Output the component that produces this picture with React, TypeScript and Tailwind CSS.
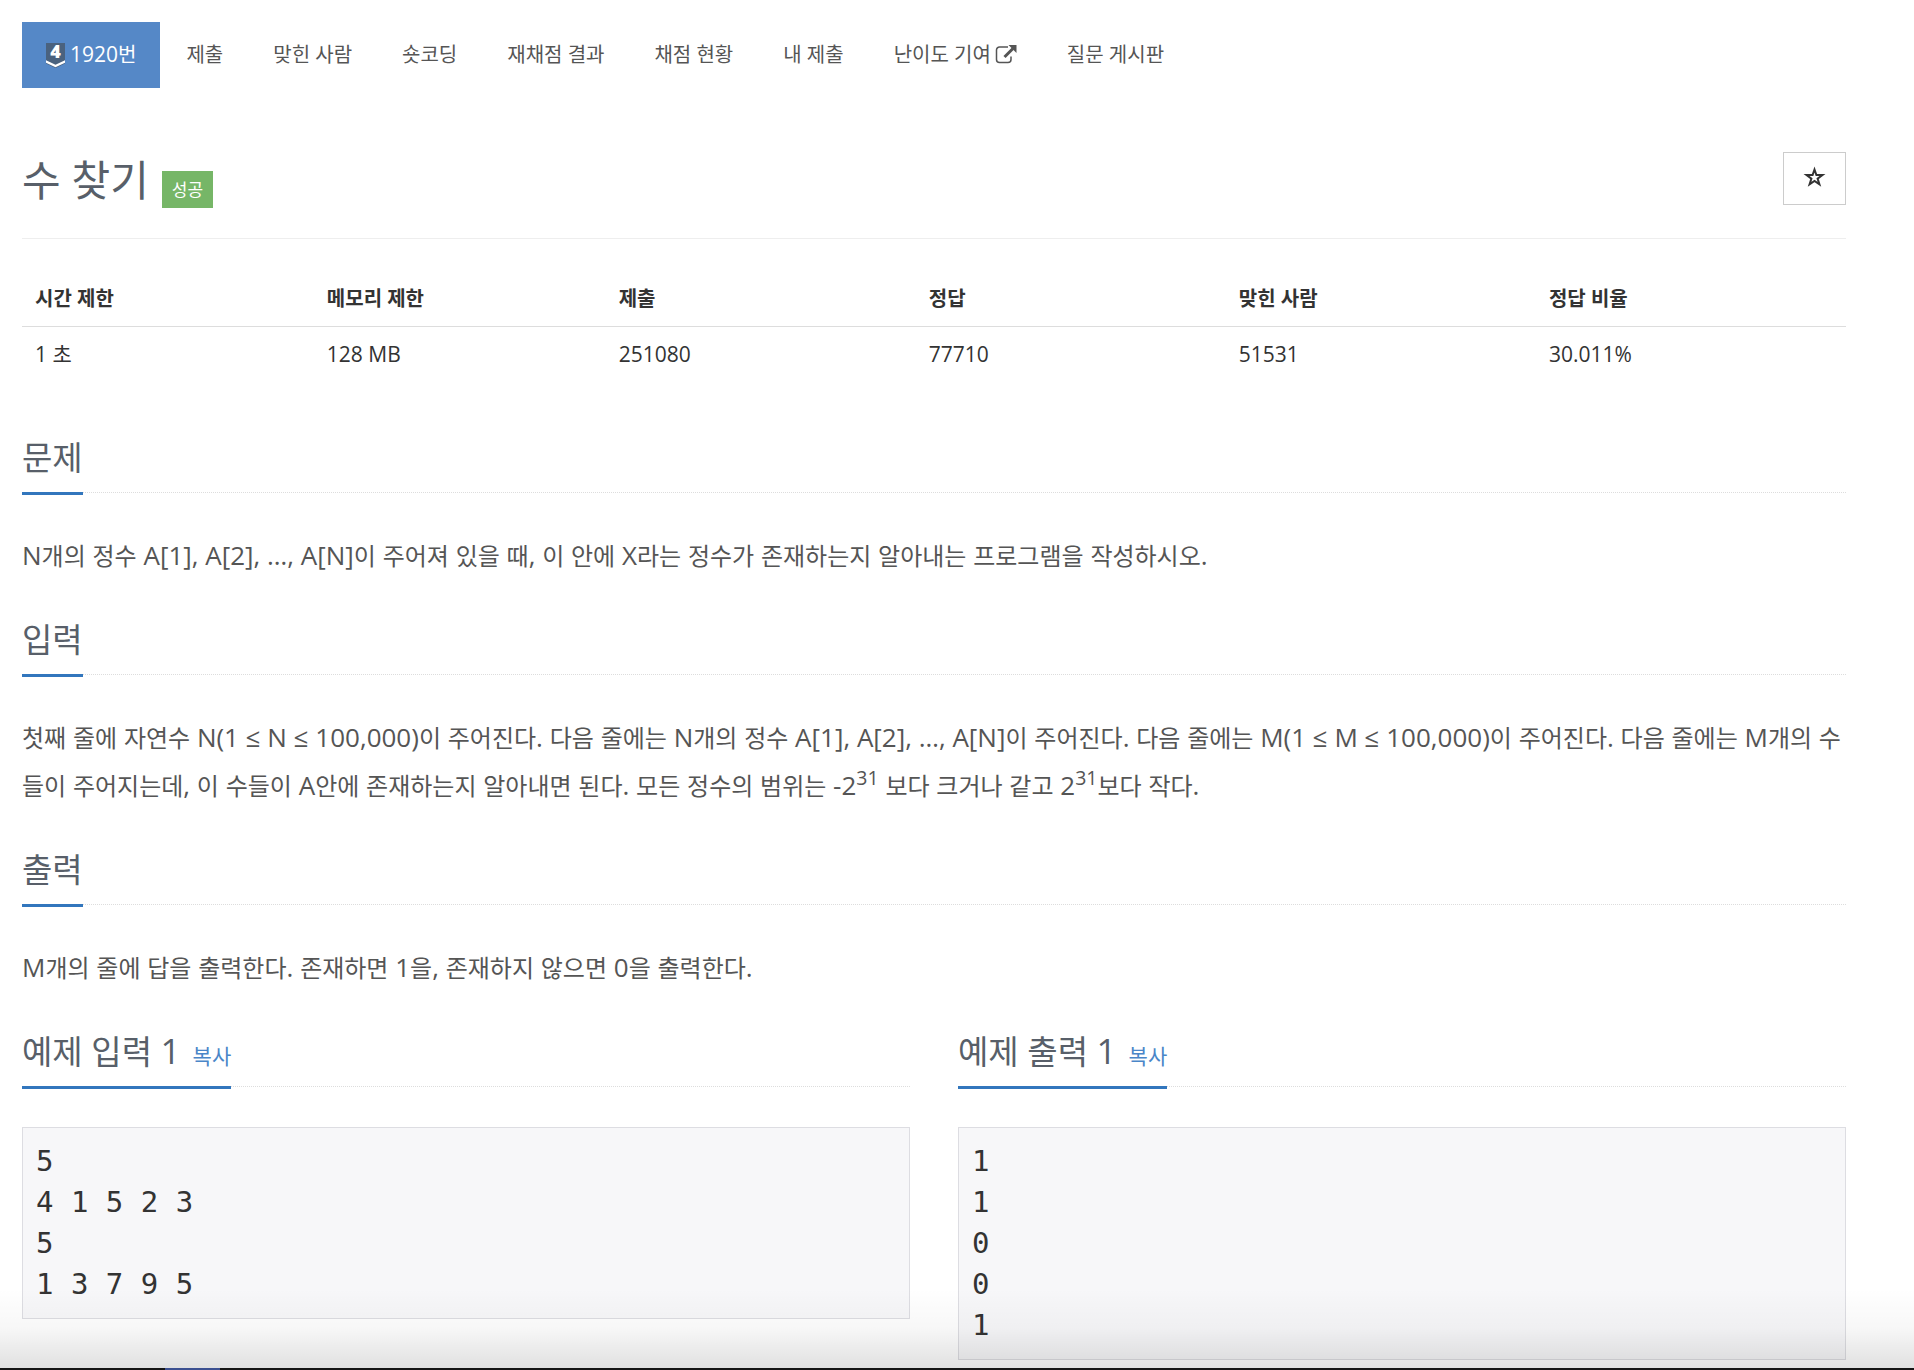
import type { ReactNode } from 'react';

type TabProps = Readonly<{
  children: ReactNode;
  active?: boolean;
}>;

type SectionTitleProps = Readonly<{
  title: string;
  index?: number;
}>;

type SampleProps = SectionTitleProps &
  Readonly<{
    data: string;
  }>;

const stats = [
  { label: '시간 제한', value: '1 초', width: 'w-[16%]' },
  { label: '메모리 제한', value: '128 MB', width: 'w-[16%]' },
  { label: '제출', value: '251080', width: 'w-[17%]' },
  { label: '정답', value: '77710', width: 'w-[17%]' },
  { label: '맞힌 사람', value: '51531', width: 'w-[17%]' },
  { label: '정답 비율', value: '30.011%', width: 'w-[17%]' },
];

// Hangul is set a little smaller than the Latin text around it
const Prose = ({ text }: { text: string }) => (
  <>
    {text.split(/([가-힣]+)/).map((part, i) =>
      i % 2 ? (
        <span key={i} className="text-[24px] leading-none">
          {part}
        </span>
      ) : (
        part
      ),
    )}
  </>
);

const TierBadge = () => (
  <svg
    className="mr-[5px] h-[25px] w-[19px] overflow-visible"
    viewBox="0 0 19 25"
    role="img"
    aria-label="Silver IV"
  >
    <path d="M0 0H19V20.500L9.500 25L0 20.500Z" fill="#4a627e" />
    <path d="M0 17.300L9.500 21.800L19 17.300V19.800L9.500 24.200L0 19.800Z" fill="#fff" />
    <text
      x="9.500"
      y="15"
      textAnchor="middle"
      fill="#fff"
      className="font-['Open_Sans'] text-[18px] font-extrabold"
    >
      4
    </text>
  </svg>
);

const ExternalIcon = () => (
  <svg className="ml-1 h-[22px] w-[22px]" viewBox="0 0 22 22" fill="none" aria-hidden="true">
    <path
      d="M13 3H4.500A3 3 0 0 0 1.500 6V15.500A3 3 0 0 0 4.500 18.500H13A3 3 0 0 0 16 15.500V12.500"
      stroke="currentColor"
      strokeWidth="1.500"
    />
    <path d="M9.500 13L18 4.500" stroke="currentColor" strokeWidth="3" />
    <path d="M13.500 1H21.500V9Z" fill="currentColor" />
  </svg>
);

const StarIcon = () => (
  <svg className="mb-1 h-[24px] w-[24px]" viewBox="0 0 24 24" fill="none" aria-hidden="true">
    <path
      d="M11.500 4.500L13.400 10.100H19.400L14.600 13.600L16.400 19.300L11.500 15.900L6.600 19.300L8.400 13.600L3.600 10.100H9.600Z"
      stroke="currentColor"
      strokeWidth="2"
    />
  </svg>
);

const Tab = ({ children, active }: TabProps) => (
  <li>
    <a
      href="#"
      aria-current={active ? 'page' : undefined}
      className={
        active
          ? 'flex h-[66px] items-center bg-[#5588c7] px-6 text-white'
          : 'flex h-[66px] items-center px-6 text-[#555]'
      }
    >
      {children}
    </a>
  </li>
);

const SectionTitle = ({ title, index }: SectionTitleProps) => (
  <div className="flex border-b border-dotted border-[#ddd]">
    <h2 className="-mb-[3px] h-[61px] border-b-[3px] border-[#3276bd] text-[33px] leading-[48px] text-[#585f69]">
      {title}
      {index && (
        <>
          {' '}
          <span className="text-[35px] leading-none">{index}</span>
          <button type="button" className="ml-3 text-[21px] leading-none text-[#4a86c8]">
            복사
          </button>
        </>
      )}
    </h2>
  </div>
);

const Sample = ({ title, index, data }: SampleProps) => (
  <section>
    <SectionTitle title={title} index={index} />
    <pre className="mt-10 border border-[#dddde2] bg-[#f7f7f9] p-[13px] font-['DejaVu_Sans_Mono',monospace] text-[29px] leading-[41px] text-[#333]">
      {data}
    </pre>
  </section>
);

export default function App() {
  return (
    <div className="relative min-h-screen overflow-hidden bg-white font-['Open_Sans','Noto_Sans_CJK_KR',sans-serif] text-[#333]">
      <div className="pt-[22px] pr-[68px] pb-[10px] pl-[22px]">
        <nav>
          <ul className="flex gap-[2px] text-[20px]">
            <Tab active>
              <TierBadge />
              <span className="text-[21px]">1920</span>번
            </Tab>
            <Tab>제출</Tab>
            <Tab>맞힌 사람</Tab>
            <Tab>숏코딩</Tab>
            <Tab>재채점 결과</Tab>
            <Tab>채점 현황</Tab>
            <Tab>내 제출</Tab>
            <Tab>
              난이도 기여
              <ExternalIcon />
            </Tab>
            <Tab>질문 게시판</Tab>
          </ul>
        </nav>

        <header className="mt-16 flex h-[87px] items-start justify-between border-b border-[#eee]">
          <div className="flex items-start">
            <h1 className="text-[42px] leading-[56px] text-[#585f69]">수 찾기</h1>
            <span className="mt-[19px] ml-[13px] flex h-[37px] items-center bg-[#76b667] px-[10px] text-[17px] text-white">
              성공
            </span>
          </div>
          <button
            type="button"
            aria-label="즐겨찾기"
            className="flex h-[53px] w-[63px] items-center justify-center border border-[#ccc]"
          >
            <StarIcon />
          </button>
        </header>

        <table className="mt-8 w-full table-fixed text-left">
          <thead>
            <tr className="h-[55px] border-b border-[#ddd] text-[20px]">
              {stats.map(({ label, width }) => (
                <th key={label} className={`px-[13px] pt-0.5 font-bold ${width}`}>
                  {label}
                </th>
              ))}
            </tr>
          </thead>
          <tbody>
            <tr className="h-14 text-[21px]">
              {stats.map(({ label, value }) => (
                <td key={label} className="px-[13px]">
                  {value}
                </td>
              ))}
            </tr>
          </tbody>
        </table>

        <main className="mt-[52px] flex flex-col gap-[37px] text-[26px] leading-[48px] text-[#555]">
          <section>
            <SectionTitle title="문제" />
            <p className="mt-[38px]">
              <Prose text="N개의 정수 A[1], A[2], …, A[N]이 주어져 있을 때, 이 안에 X라는 정수가 존재하는지 알아내는 프로그램을 작성하시오." />
            </p>
          </section>
          <section>
            <SectionTitle title="입력" />
            <p className="mt-[38px]">
              <Prose text="첫째 줄에 자연수 N(1 ≤ N ≤ 100,000)이 주어진다. 다음 줄에는 N개의 정수 A[1], A[2], …, A[N]이 주어진다. 다음 줄에는 M(1 ≤ M ≤ 100,000)이 주어진다. 다음 줄에는 M개의 수들이 주어지는데, 이 수들이 A안에 존재하는지 알아내면 된다. 모든 정수의 범위는 -2" />
              <sup>31</sup>
              <Prose text=" 보다 크거나 같고 2" />
              <sup>31</sup>
              <Prose text="보다 작다." />
            </p>
          </section>
          <section>
            <SectionTitle title="출력" />
            <p className="mt-[38px]">
              <Prose text="M개의 줄에 답을 출력한다. 존재하면 1을, 존재하지 않으면 0을 출력한다." />
            </p>
          </section>
          <div className="grid grid-cols-2 items-start gap-12">
            <Sample title="예제 입력" index={1} data={'5\n4 1 5 2 3\n5\n1 3 7 9 5'} />
            <Sample title="예제 출력" index={1} data={'1\n1\n0\n0\n1'} />
          </div>
        </main>
      </div>

      {/* shade and dark edge lying over the foot of the page */}
      <div className="pointer-events-none absolute inset-x-0 bottom-0">
        <div className="h-20 bg-linear-to-b from-black/0 via-black/3 to-black/12" />
        <div className="h-[2px] bg-[#151515] pl-[165px]">
          <div className="h-full w-[55px] bg-[#3b5090]" />
        </div>
      </div>
    </div>
  );
}
